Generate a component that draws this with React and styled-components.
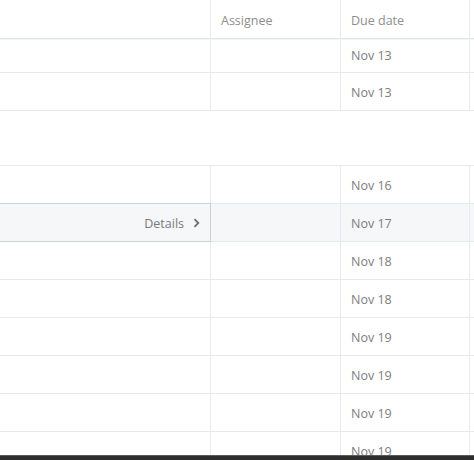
import React from "react";
import styled, { createGlobalStyle } from "styled-components";

const GlobalStyle = createGlobalStyle`
  html, body {
    margin: 0;
    padding: 0;
    background: #ffffff;
    overflow: hidden;
  }
  body {
    font-family: "Open Sans", "Noto Sans", Arial, sans-serif;
  }
`;

const Table = styled.div`
  width: 474px;
  height: 460px;
  overflow: hidden;
  display: flex;
  flex-direction: column;
`;

const Row = styled.div`
  display: grid;
  grid-template-columns: 211px 130px 129px 1fr;
  height: ${(p) => p.$h || 38}px;
  flex-shrink: 0;
  box-sizing: border-box;
  border-bottom: 1px solid #e7eaed;
  background: ${(p) => (p.$active ? "#f5f7f9" : "#ffffff")};
`;

const HeaderRow = styled(Row)`
  border-bottom: 1px solid #e3e6e9;
  box-shadow: 0 1px 0 #f1f3f5;
  position: relative;
  z-index: 1;
`;

const Cell = styled.div`
  box-sizing: border-box;
  border-right: 1px solid #e7eaed;
  display: flex;
  align-items: center;
  padding: ${(p) => p.$push ?? 1}px 0 0 10px;
  font-size: 12.5px;
  color: ${(p) => (p.$head ? "#8e8e8e" : "#7d7d7d")};
  white-space: nowrap;
  &:last-child {
    border-right: none;
  }
`;

const DetailsCell = styled(Cell)`
  justify-content: flex-end;
  padding: 1px 10px 0 0;
  border-right: 1px solid #cbd3da;
  border-bottom: 1px solid #cbd3da;
  margin-bottom: -1px;
  box-shadow: 0 -1px 0 #cbd3da;
  position: relative;
  z-index: 1;
  color: #7a7a7a;
  font-size: 12.5px;
  gap: 9px;
`;

const Chevron = styled.svg`
  width: 7px;
  height: 10px;
  display: block;
`;

const GroupGap = styled.div`
  height: 55px;
  flex-shrink: 0;
  box-sizing: border-box;
  border-bottom: 1px solid #e7eaed;
`;

const BottomBar = styled.div`
  position: fixed;
  left: 0;
  right: 0;
  bottom: 0;
  height: 4px;
  background: #2e2e2e;
  border-top: 1px solid #5a5a5a;
`;

const topDates = ["Nov 13", "Nov 13"];
const dates = ["Nov 16", "Nov 17", "Nov 18", "Nov 18", "Nov 19", "Nov 19", "Nov 19", "Nov 19"];

function DataRow({ date, h, push, active }) {
  return (
    <Row $h={h} $active={active}>
      {active ? (
        <DetailsCell>
          Details
          <Chevron viewBox="0 0 7 10">
            <path d="M1.5 1.2 L5.3 5 L1.5 8.8" fill="none" stroke="#6f6f6f" strokeWidth="1.8" />
          </Chevron>
        </DetailsCell>
      ) : (
        <Cell />
      )}
      <Cell />
      <Cell $push={push}>{date}</Cell>
      <Cell />
    </Row>
  );
}

export default function App() {
  return (
    <>
      <GlobalStyle />
      <Table>
        <HeaderRow $h={39}>
          <Cell $head />
          <Cell $head $push={3}>Assignee</Cell>
          <Cell $head $push={3}>Due date</Cell>
          <Cell $head />
        </HeaderRow>
        <DataRow date={topDates[0]} h={34} push={0} />
        <DataRow date={topDates[1]} push={2} />
        <GroupGap />
        {dates.map((d, i) => (
          <DataRow key={i} date={d} push={2} active={i === 1} />
        ))}
      </Table>
      <BottomBar />
    </>
  );
}
